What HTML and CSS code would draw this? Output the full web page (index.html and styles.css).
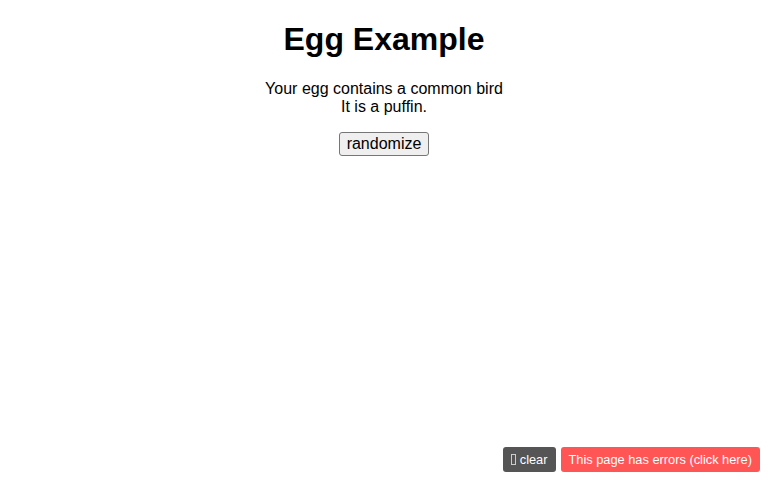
FILE: index.html
```html
<!DOCTYPE html>
<html lang="en">
  <head>
    <meta charset="UTF-8" />
    <meta name="viewport" content="width=device-width, initial-scale=1.0" />
    <title>Egg Example</title>
    <link rel="stylesheet" href="styles.css">
  </head>
  <body>
    <div class="egg-app">
      <h1>Egg Example</h1>
      <p class="egg-result">
        Your egg contains a common bird<br />
        It is a puffin.
      </p>
      <button class="randomize-btn">randomize</button>
    </div>
    <div class="error-bar">
      <button class="error-clear"><span class="icon"></span> clear</button>
      <button class="error-link">This page has errors (click here)</button>
    </div>
  </body>
</html>
```

FILE: styles.css
```css
body {
  margin: 0;
  font-family: "Liberation Sans", Arial, sans-serif;
  font-size: 16px;
  color: #000;
  background: #fff;
}

.egg-app {
  text-align: center;
}

.egg-app h1 {
  font-size: 32px;
  margin: 21px 0 22px;
}

.egg-result {
  margin: 0 0 16px;
  line-height: 18px;
}

.randomize-btn {
  font-family: "Liberation Sans", Arial, sans-serif;
  font-size: 16px;
  color: #000;
  background: #efefef;
  border: 1px solid #767676;
  border-radius: 3px;
  padding: 2px 7px;
  height: 24px;
}

.error-bar {
  position: fixed;
  right: 8px;
  bottom: 8px;
  display: flex;
  gap: 5px;
}

.error-bar button {
  font-family: "Liberation Sans", Arial, sans-serif;
  font-size: 12.8px;
  color: #fff;
  border: none;
  border-radius: 3px;
  height: 25px;
  padding: 0 8px;
  cursor: pointer;
}

/* missing icon-font glyph box */
.error-clear .icon {
  display: inline-block;
  width: 3px;
  height: 9px;
  border: 1px solid rgba(255, 255, 255, 0.7);
  vertical-align: -1px;
}

.error-clear {
  background: #555;
}

.error-link {
  background: #f55;
}
```
